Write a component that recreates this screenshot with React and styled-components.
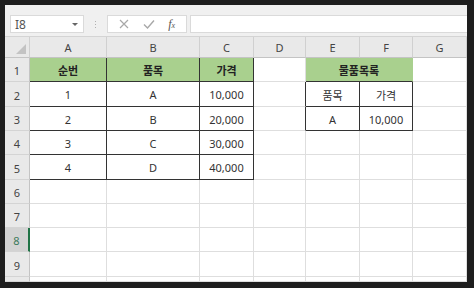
import React from 'react'
import styled, { createGlobalStyle } from 'styled-components'

const GlobalStyle = createGlobalStyle`
    html, body {
        margin: 0;
        padding: 0;
        background: #1e1e1e;
    }
`

const Frame = styled.div`
    width: 474px;
    height: 288px;
    box-sizing: border-box;
    padding: 5px 7px 6px 5px;
    background: #1e1e1e;
`

const Window = styled.div`
    width: 462px;
    height: 277px;
    overflow: hidden;
    background: #ffffff;
    display: flex;
    flex-direction: column;
    font-family: "Noto Sans", "Noto Sans CJK KR", sans-serif;
`

const FormulaBar = styled.div`
    height: 32px;
    box-sizing: border-box;
    padding: 10px 0 3px 5px;
    background: #f0f0f0;
    border-bottom: 1px solid #d4d4d4;
    display: flex;
    align-items: stretch;
`

const NameBox = styled.div`
    width: 74px;
    box-sizing: border-box;
    background: #fff;
    border: 1px solid #dadada;
    display: flex;
    align-items: center;
    justify-content: space-between;
    padding: 0 5px 0 4px;
    font-size: 12px;
    color: #555;
`

const Caret = styled.span`
    width: 0;
    height: 0;
    border-left: 3px solid transparent;
    border-right: 3px solid transparent;
    border-top: 3px solid #666;
`

const Dots = styled.div`
    width: 23px;
    display: flex;
    flex-direction: column;
    align-items: center;
    justify-content: center;
    gap: 2px;
    span {
        width: 1px;
        height: 1px;
        background: #b0b0b0;
    }
`

const FxButtons = styled.div`
    width: 80px;
    box-sizing: border-box;
    background: #fff;
    border: 1px solid #dadada;
    display: flex;
    align-items: center;
    justify-content: space-around;
    padding: 0 4px;
`

const FxLabel = styled.span`
    font-family: "Liberation Serif", serif;
    font-style: italic;
    font-size: 12px;
    color: #555;
    sub {
        font-size: 8px;
        vertical-align: baseline;
    }
`

const FormulaInput = styled.div`
    flex: 1;
    margin-left: 3px;
    background: #fff;
    border: 1px solid #dadada;
    border-right: none;
`

const Sheet = styled.div`
    display: grid;
    grid-template-columns: 25px 77px 93px 54px 52px 54px 53px 54px;
    grid-template-rows: 21px 24px 25px 24px 24px 25px 24px 24px 24px 25px 5px;
`

const ColHead = styled.div`
    box-sizing: border-box;
    background: #e9e9e9;
    border-right: 1px solid #d0d0d0;
    border-bottom: 1px solid #c4c4c4;
    display: flex;
    align-items: center;
    justify-content: center;
    font-size: 11px;
    color: #444;
    position: relative;
`

const Corner = styled.span`
    position: absolute;
    right: 3px;
    bottom: 3px;
    width: 0;
    height: 0;
    border-left: 10px solid transparent;
    border-bottom: 10px solid #c3c3c3;
`

const RowHead = styled.div`
    box-sizing: border-box;
    background: ${p => (p.$active ? '#d3d3d3' : '#e9e9e9')};
    border-bottom: 1px solid #d4d4d4;
    border-right: ${p => (p.$active ? '2px solid #217346' : '1px solid #c4c4c4')};
    display: flex;
    align-items: flex-end;
    justify-content: center;
    padding-bottom: 3px;
    font-size: 11px;
    color: ${p => (p.$active ? '#3c7a5c' : '#444')};
`

const Cell = styled.div`
    box-sizing: border-box;
    grid-column: ${p => (p.$span ? `span ${p.$span}` : 'auto')};
    background: ${p => (p.$fill ? '#a9d08e' : '#fff')};
    border-right: 1px solid ${p => (p.$darkR ? '#333' : p.$fill ? '#a9d08e' : '#dedede')};
    border-bottom: 1px solid ${p => (p.$darkB ? '#333' : '#dedede')};
    display: flex;
    align-items: center;
    justify-content: center;
    padding-top: 1px;
    font-size: 11px;
    font-weight: ${p => (p.$bold ? 700 : 400)};
    color: ${p => (p.$bold ? '#222' : '#333')};
    white-space: nowrap;
`

const cols = ['A', 'B', 'C', 'D', 'E', 'F', 'G']

const rows = [
    [
        { v: '순번', fill: true, bold: true, r: true, b: true },
        { v: '품목', fill: true, bold: true, r: true, b: true },
        { v: '가격', fill: true, bold: true, r: true, b: true },
        {},
        { v: '물품목록', fill: true, bold: true, span: 2, b: true },
        {},
    ],
    [
        { v: '1', r: true, b: true },
        { v: 'A', r: true, b: true },
        { v: '10,000', r: true, b: true },
        { r: true },
        { v: '품목', r: true, b: true },
        { v: '가격', r: true, b: true },
        {},
    ],
    [
        { v: '2', r: true, b: true },
        { v: 'B', r: true, b: true },
        { v: '20,000', r: true, b: true },
        { r: true },
        { v: 'A', r: true, b: true },
        { v: '10,000', r: true, b: true },
        {},
    ],
    [
        { v: '3', r: true, b: true },
        { v: 'C', r: true, b: true },
        { v: '30,000', r: true, b: true },
        {}, {}, {}, {},
    ],
    [
        { v: '4', r: true, b: true },
        { v: 'D', r: true, b: true },
        { v: '40,000', r: true, b: true },
        {}, {}, {}, {},
    ],
]

// rows 6..10 are empty; row 10 only peeks in at the bottom
while (rows.length < 10) rows.push([{}, {}, {}, {}, {}, {}, {}])

export default function App() {
    return (
        <Frame>
            <GlobalStyle />
            <Window>
                <FormulaBar>
                    <NameBox>
                        I8
                        <Caret />
                    </NameBox>
                    <Dots>
                        <span />
                        <span />
                        <span />
                    </Dots>
                    <FxButtons>
                        <svg width="10" height="10" viewBox="0 0 10 10">
                            <path d="M1 1L9 9M9 1L1 9" stroke="#a8a8a8" strokeWidth="1.2" fill="none" />
                        </svg>
                        <svg width="12" height="10" viewBox="0 0 12 10">
                            <path d="M1 5.5L4.5 9L11 1.5" stroke="#a8a8a8" strokeWidth="1.4" fill="none" />
                        </svg>
                        <FxLabel>
                            f<sub>x</sub>
                        </FxLabel>
                    </FxButtons>
                    <FormulaInput />
                </FormulaBar>
                <Sheet>
                    <ColHead>
                        <Corner />
                    </ColHead>
                    {cols.map(c => (
                        <ColHead key={c}>{c}</ColHead>
                    ))}
                    {rows.map((row, i) => (
                        <React.Fragment key={i}>
                            <RowHead $active={i === 7}>{i < 9 ? i + 1 : ''}</RowHead>
                            {row.map((c, j) => (
                                <Cell
                                    key={j}
                                    $span={c.span}
                                    $fill={c.fill}
                                    $bold={c.bold}
                                    $darkR={c.r}
                                    $darkB={c.b}
                                >
                                    {c.v}
                                </Cell>
                            ))}
                        </React.Fragment>
                    ))}
                </Sheet>
            </Window>
        </Frame>
    )
}
